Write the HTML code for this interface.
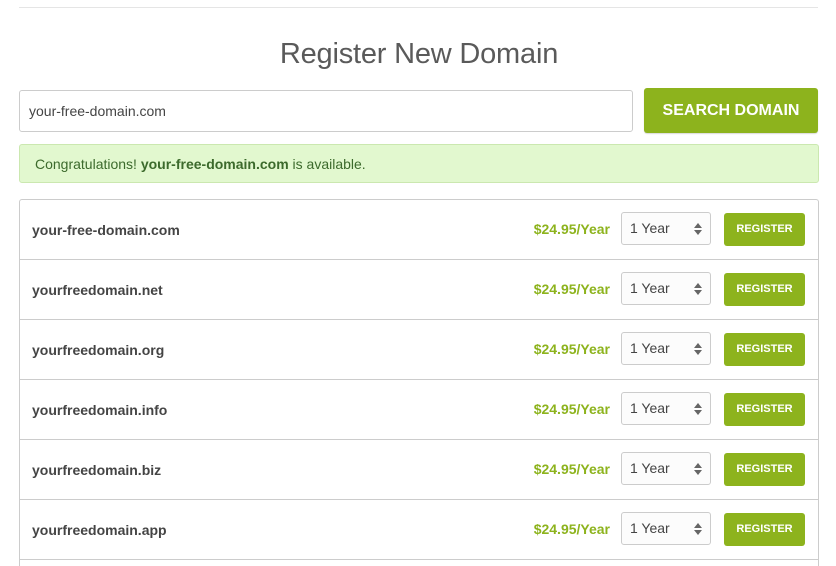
<!DOCTYPE html>
<html style="overflow:hidden;height:566px"><head><style>
body{margin:0;background:#fff;font-family:"Liberation Sans",sans-serif;width:836px;height:566px;overflow:hidden;position:relative}
.abs{position:absolute}
.top{left:19px;top:7px;width:799px;height:1px;background:#e5e5e5}
h1{position:absolute;left:0;width:838px;top:38px;margin:0;text-align:center;font-weight:normal;font-size:29px;color:#5a5a5a;letter-spacing:-0.2px}
.inp{left:19px;top:90px;width:614px;height:42px;border:1px solid #ccc;border-radius:3px;box-sizing:border-box;font-size:14px;color:#444;padding:12px 9px}
.btn{left:644px;top:88px;width:174px;height:45px;background:#8db31d;border-radius:3px;color:#fff;font-weight:bold;font-size:16px;text-align:center;line-height:45px;box-shadow:0 1px 1px rgba(0,0,0,.15)}
.alert{left:19px;top:144px;width:800px;height:39px;box-sizing:border-box;background:#e2f8cf;border:1px solid #cbe8b0;border-radius:3px;color:#3c6a2c;font-size:14px;padding:11px 15px}
.tbl{left:19px;top:199px;width:800px;height:367px;border:1px solid #ccc;border-bottom:0;box-sizing:border-box;border-radius:3px 3px 0 0;overflow:hidden}
.row{position:absolute;left:0;width:798px;height:60px;border-bottom:1px solid #ccc;box-sizing:border-box}
.dn{position:absolute;left:12px;top:22px;font-weight:bold;font-size:14px;color:#444}
.pr{position:absolute;right:208px;top:21px;font-weight:bold;font-size:14px;color:#8db31d}
.sel{position:absolute;left:601px;top:12px;width:90px;height:33px;border:1px solid #ccc;border-radius:3px;box-sizing:border-box;font-size:14px;color:#444;padding:7px 8px;background:#fcfcfc}
.sel:after{content:"";position:absolute;right:8px;top:10px;border:4px solid transparent;border-bottom:5px solid #666;border-top:0}
.sel:before{content:"";position:absolute;right:8px;top:17px;border:4px solid transparent;border-top:5px solid #666;border-bottom:0}
.reg{position:absolute;left:704px;top:13px;width:81px;height:33px;background:#8db31d;border-radius:3px;color:#fff;font-weight:bold;font-size:11px;text-align:center;line-height:33px}
</style></head><body>
<div class="abs top"></div>
<h1>Register New Domain</h1>
<div class="abs inp">your-free-domain.com</div>
<div class="abs btn">SEARCH DOMAIN</div>
<div class="abs alert">Congratulations! <b>your-free-domain.com</b> is available.</div>
<div class="abs tbl">
<div class="row" style="top:0"><div class="dn">your-free-domain.com</div><div class="pr">$24.95/Year</div><div class="sel">1 Year</div><div class="reg">REGISTER</div></div>
<div class="row" style="top:60px"><div class="dn">yourfreedomain.net</div><div class="pr">$24.95/Year</div><div class="sel">1 Year</div><div class="reg">REGISTER</div></div>
<div class="row" style="top:120px"><div class="dn">yourfreedomain.org</div><div class="pr">$24.95/Year</div><div class="sel">1 Year</div><div class="reg">REGISTER</div></div>
<div class="row" style="top:180px"><div class="dn">yourfreedomain.info</div><div class="pr">$24.95/Year</div><div class="sel">1 Year</div><div class="reg">REGISTER</div></div>
<div class="row" style="top:240px"><div class="dn">yourfreedomain.biz</div><div class="pr">$24.95/Year</div><div class="sel">1 Year</div><div class="reg">REGISTER</div></div>
<div class="row" style="top:300px"><div class="dn">yourfreedomain.app</div><div class="pr">$24.95/Year</div><div class="sel">1 Year</div><div class="reg">REGISTER</div></div>
</div>
</body></html>
